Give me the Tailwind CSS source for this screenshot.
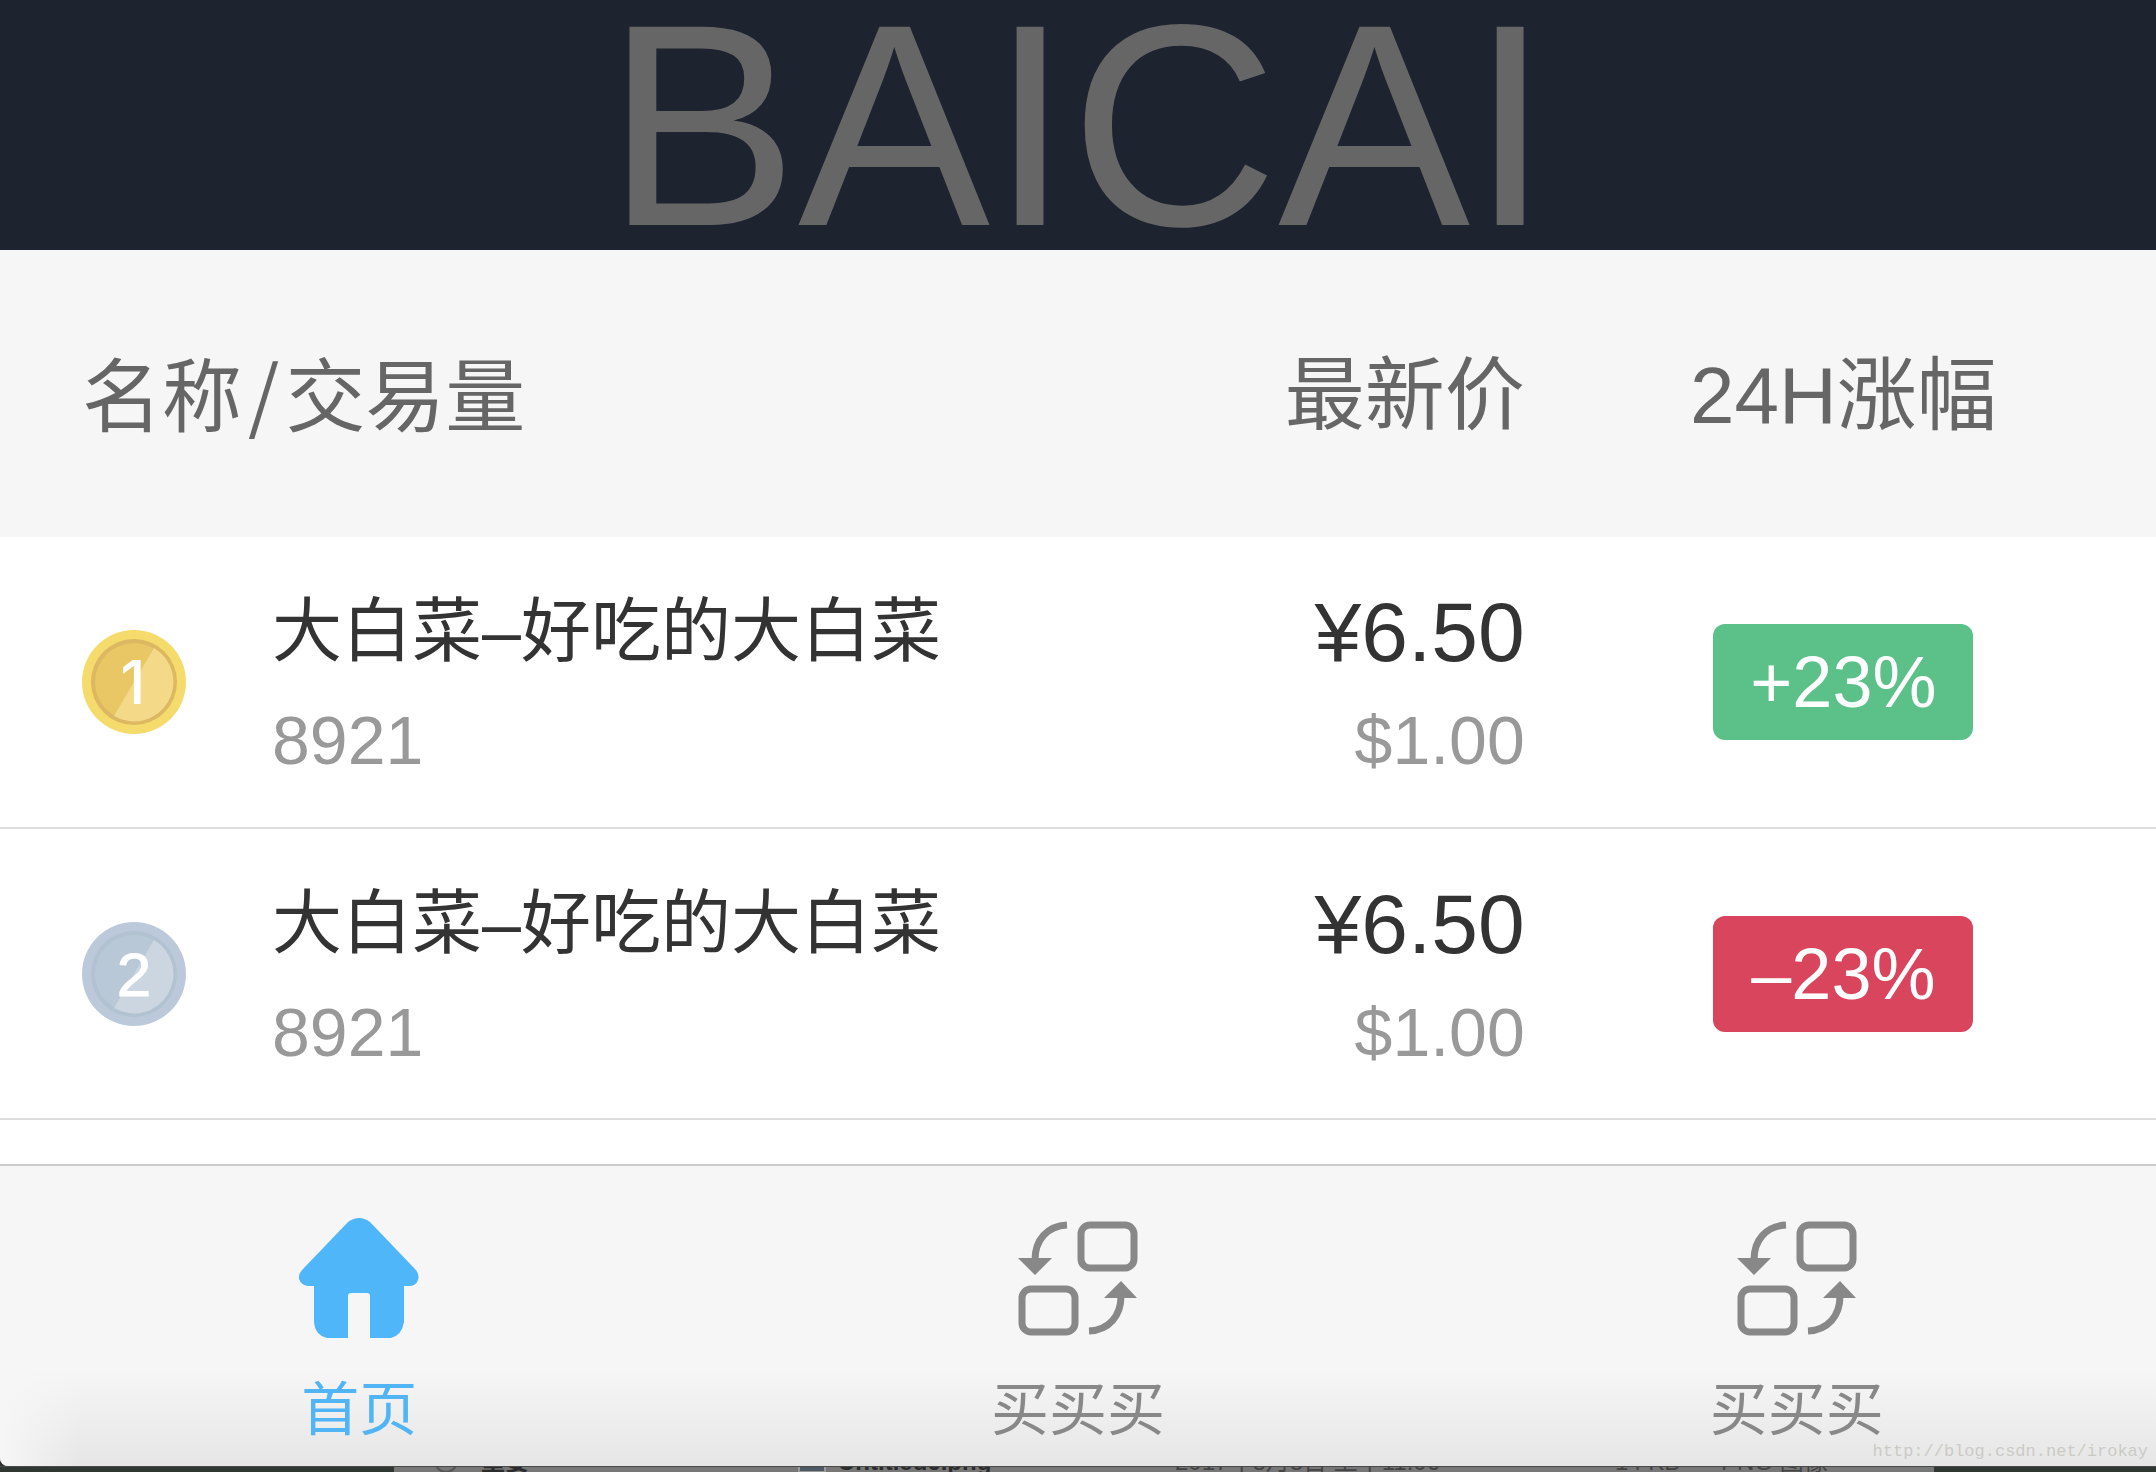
<!DOCTYPE html>
<html lang="zh-CN">
<head>
  <meta charset="UTF-8">
  <meta name="viewport" content="width=device-width, initial-scale=1.0">
  <title>BAICAI</title>
  <script src="https://cdn.jsdelivr.net/npm/@tailwindcss/browser@4"></script>
</head>
<body class="flex min-h-screen flex-col bg-[#2c332f] font-['Liberation_Sans','Noto_Sans_CJK_SC',sans-serif]">

  <!-- Banner -->
  <header class="bg-[#1d232f] text-center">
    <h1 class="text-[288px] leading-[250px] text-[#666]">BAICAI</h1>
  </header>

  <!-- Market list -->
  <main class="flex-1 bg-white">
    <table class="w-full table-fixed border-collapse">
      <colgroup>
        <col class="w-[272px]">
        <col>
        <col class="w-[400px]">
        <col class="w-[29%]">
      </colgroup>
      <thead class="bg-[#f6f6f6]">
        <tr class="h-[287px] text-[80px] leading-[120px] text-[#666]">
          <th colspan="2" class="pl-[82px] text-left font-normal">名称<span class="px-[6px] font-['Noto_Sans_CJK_SC',sans-serif]">/</span>交易量</th>
          <th class="pt-1 pr-[6px] text-right font-normal">最新价</th>
          <th class="pt-1 font-normal">24H涨幅</th>
        </tr>
      </thead>
      <tbody>
        <tr class="h-[291px] border-b-2 border-[#ddd]">
          <td class="pl-[82px]">
            <svg class="size-[104px]" viewBox="0 0 104 104" role="img" aria-label="第1名">
              <circle cx="52" cy="52" r="52" fill="#f5db6b"/>
              <circle cx="52" cy="52" r="43" fill="#dcb862"/>
              <circle cx="52" cy="52" r="39" fill="#e9c764"/>
              <path d="M72 18A39 39 0 0 1 32 86Z" fill="#f4da88"/>
              <text x="51" y="74" text-anchor="middle" class="fill-white font-[Inter] text-[60px] font-medium">1</text>
            </svg>
          </td>
          <td class="pt-2">
            <p class="text-[70px] leading-[108px] text-[#333]">大白菜–好吃的大白菜</p>
            <p class="text-[68px] leading-[108px] text-[#999]">8921</p>
          </td>
          <td class="pt-2 pr-[6px] text-right">
            <p class="text-[84px] leading-[108px] text-[#333]">¥6.50</p>
            <p class="text-[68px] leading-[108px] text-[#999]">$1.00</p>
          </td>
          <td class="text-center">
            <span class="inline-block w-[260px] rounded-xl bg-[#5bc189] align-middle text-[72px] leading-[116px] text-white">+23%</span>
          </td>
        </tr>
        <tr class="h-[291px] border-b-2 border-[#ddd]">
          <td class="pl-[82px]">
            <svg class="size-[104px]" viewBox="0 0 104 104" role="img" aria-label="第2名">
              <circle cx="52" cy="52" r="52" fill="#bbc9da"/>
              <circle cx="52" cy="52" r="43" fill="#b3c2d0"/>
              <circle cx="52" cy="52" r="39" fill="#b9c8d6"/>
              <path d="M72 18A39 39 0 0 1 32 86Z" fill="#cbd6e1"/>
              <text x="52" y="74" text-anchor="middle" class="fill-white text-[62px]" stroke="#fff" stroke-width="1">2</text>
            </svg>
          </td>
          <td class="pt-2">
            <p class="text-[70px] leading-[108px] text-[#333]">大白菜–好吃的大白菜</p>
            <p class="text-[68px] leading-[108px] text-[#999]">8921</p>
          </td>
          <td class="pt-2 pr-[6px] text-right">
            <p class="text-[84px] leading-[108px] text-[#333]">¥6.50</p>
            <p class="text-[68px] leading-[108px] text-[#999]">$1.00</p>
          </td>
          <td class="text-center">
            <span class="inline-block w-[260px] rounded-xl bg-[#d9455d] align-middle text-[72px] leading-[116px] text-white">–23%</span>
          </td>
        </tr>
      </tbody>
    </table>
  </main>

  <!-- Tab bar -->
  <nav class="relative grid grid-cols-3 rounded-bl-lg border-t-2 border-[#ccc] bg-[linear-gradient(to_right,#f6f6f6,transparent_80px),linear-gradient(to_bottom,#f6f6f6_68%,#e6e6e6)] pt-[52px] pb-4 text-[58px] leading-[80px] text-[#888]">
    <a href="#" class="flex flex-col items-center gap-8 text-[#50b4f5]">
      <svg class="size-[120px]" viewBox="0 0 120 120" fill="#50b6fa" aria-hidden="true">
        <path d="M49 4Q60-4 71 4L116 51Q121 56 119 62Q117 68 110 68H105V104Q103 117 92 120H71V78Q71 75 68 75H52Q49 75 49 78V120H28Q16 117 15 104V68H9Q2 67 0 61Q-1 56 4 51Z"/>
      </svg>
      首页
    </a>
    <a href="#" class="flex flex-col items-center gap-8">
      <svg class="size-[120px]" viewBox="0 0 120 120" fill="none" stroke="#888" stroke-width="7" aria-hidden="true">
        <rect x="63" y="7" width="53" height="43" rx="9"/>
        <rect x="4" y="71" width="53" height="43" rx="9"/>
        <path d="M49 7C29 8 17 22 17 42"/>
        <path d="M71 113C91 112 103 98 103 78"/>
        <path d="M0 40H34L17 57ZM86 80H119L103 63Z" fill="#888" stroke="none"/>
      </svg>
      买买买
    </a>
    <a href="#" class="flex flex-col items-center gap-8">
      <svg class="size-[120px]" viewBox="0 0 120 120" fill="none" stroke="#888" stroke-width="7" aria-hidden="true">
        <rect x="63" y="7" width="53" height="43" rx="9"/>
        <rect x="4" y="71" width="53" height="43" rx="9"/>
        <path d="M49 7C29 8 17 22 17 42"/>
        <path d="M71 113C91 112 103 98 103 78"/>
        <path d="M0 40H34L17 57ZM86 80H119L103 63Z" fill="#888" stroke="none"/>
      </svg>
      买买买
    </a>
    <span class="absolute right-2 bottom-1 font-['Liberation_Mono',monospace] text-[17px] leading-5 text-[#cbcbc5]">http://blog.csdn.net/irokay</span>
  </nav>

  <!-- Sliver of the file list behind the window -->
  <footer class="grid h-[6px] grid-cols-[394fr_87fr_317fr_40fr_337fr_440fr_106fr_213fr_222fr] items-end overflow-hidden border-t border-[#4a4a4a] bg-[#2f3733] text-[24px] leading-[22px] whitespace-nowrap text-[#2b2b2b]">
    <span class="h-[6px]"></span>
    <span class="flex h-[6px] items-end bg-[#777] pl-10"><i class="size-6 rounded-full border-2 border-[#555]"></i></span>
    <span class="flex h-[6px] items-end bg-[#777] font-bold">重要</span>
    <span class="flex h-[6px] items-end bg-[#777]"><i class="size-7 border-2 border-[#999] bg-[#4d5a66]"></i></span>
    <span class="flex h-[6px] items-end bg-[#777] font-bold">Untitled6.png</span>
    <span class="flex h-[6px] items-end bg-[#777] text-[#444]">2017年8月8日 上午11:06</span>
    <span class="flex h-[6px] items-end bg-[#777] text-[#444]">14 KB</span>
    <span class="flex h-[6px] items-end bg-[#777] text-[#444]">PNG 图像</span>
    <span class="h-[6px]"></span>
  </footer>

</body>
</html>
